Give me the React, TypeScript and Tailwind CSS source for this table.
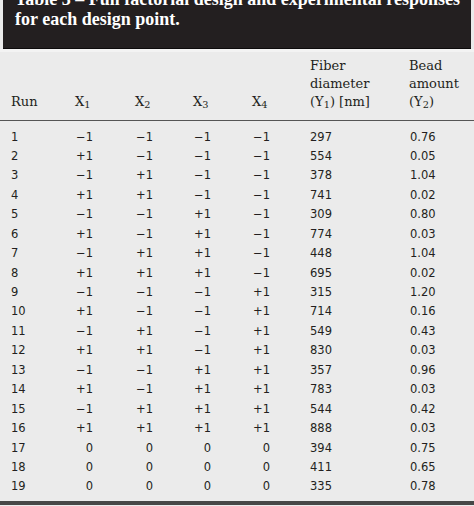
import React from "react";

const rows: [string, string, string, string, string, string, string][] = [
  ["1", "−1", "−1", "−1", "−1", "297", "0.76"],
  ["2", "+1", "−1", "−1", "−1", "554", "0.05"],
  ["3", "−1", "+1", "−1", "−1", "378", "1.04"],
  ["4", "+1", "+1", "−1", "−1", "741", "0.02"],
  ["5", "−1", "−1", "+1", "−1", "309", "0.80"],
  ["6", "+1", "−1", "+1", "−1", "774", "0.03"],
  ["7", "−1", "+1", "+1", "−1", "448", "1.04"],
  ["8", "+1", "+1", "+1", "−1", "695", "0.02"],
  ["9", "−1", "−1", "−1", "+1", "315", "1.20"],
  ["10", "+1", "−1", "−1", "+1", "714", "0.16"],
  ["11", "−1", "+1", "−1", "+1", "549", "0.43"],
  ["12", "+1", "+1", "−1", "+1", "830", "0.03"],
  ["13", "−1", "−1", "+1", "+1", "357", "0.96"],
  ["14", "+1", "−1", "+1", "+1", "783", "0.03"],
  ["15", "−1", "+1", "+1", "+1", "544", "0.42"],
  ["16", "+1", "+1", "+1", "+1", "888", "0.03"],
  ["17", "0", "0", "0", "0", "394", "0.75"],
  ["18", "0", "0", "0", "0", "411", "0.65"],
  ["19", "0", "0", "0", "0", "335", "0.78"],
];

const cols = "grid grid-cols-[64px_60px_58px_59px_58px_99px_1fr] pl-[11px]";

export default function App() {
  return (
    <div className="w-[474px] h-[506px] overflow-hidden bg-[#ebebeb] text-[#231f20]">
      <div className="mx-[3px] h-[49px] bg-[#231f20] border-b border-[#0d0b0c] overflow-hidden">
        <div className="-mt-[11px] pl-[12px] text-white font-bold text-[18px] leading-[20px] whitespace-nowrap font-['Liberation_Serif',serif]">
          Table 3 – Full factorial design and experimental responses
          <br />
          for each design point.
        </div>
      </div>
      <div className="h-[3px] bg-[#f3f3f3]" />
      <div className={`${cols} items-end pt-[5px] pb-[8.5px] text-[13px] leading-[18px] font-['DejaVu_Serif',serif]`}>
        <div>Run</div>
        <div>X<sub>1</sub></div>
        <div>X<sub>2</sub></div>
        <div>X<sub>3</sub></div>
        <div>X<sub>4</sub></div>
        <div>
          Fiber
          <br />
          diameter
          <br />
          (Y<sub>1</sub>) [nm]
        </div>
        <div>
          Bead
          <br />
          amount
          <br />
          (Y<sub>2</sub>)
        </div>
      </div>
      <div className="h-[1.5px] bg-[#555555]" />
      <div className="pt-[6.5px] text-[11.5px] font-['DejaVu_Sans',sans-serif]">
        {rows.map((r) => (
          <div key={r[0]} className={`${cols} h-[19.45px] leading-[19.45px]`}>
            <div>{r[0]}</div>
            {[r[1], r[2], r[3], r[4]].map((v, i) => (
              <div key={i}>
                <span className="inline-block w-[18px] text-right">{v}</span>
              </div>
            ))}
            <div>{r[5]}</div>
            <div className="pl-[1px]">{r[6]}</div>
          </div>
        ))}
      </div>
      <div className="mt-[4px] h-[4px] bg-[#474747]" />
    </div>
  );
}
